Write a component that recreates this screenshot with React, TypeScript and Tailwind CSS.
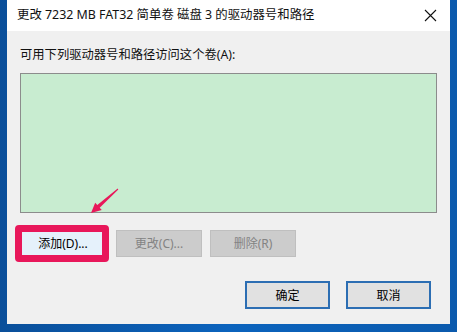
const font = "font-['Noto_Sans','Noto_Sans_CJK_SC',sans-serif]";

function Button({
  label,
  disabled,
  active,
  primary,
}: {
  label: string;
  disabled?: boolean;
  active?: boolean;
  primary?: boolean;
}) {
  let cls = "border border-[#adadad] bg-[#e1e1e1] text-black";
  if (disabled) cls = "border border-[#bfbfbf] bg-[#cccccc] text-[#838383]";
  if (active) cls = "border border-[#0078d7] bg-[#e5f1fb] text-black";
  if (primary) cls = "border-2 border-[#2c6eb3] bg-[#e1e1e1] text-black";
  return (
    <div
      className={`flex items-center justify-center pt-[1px] text-[12px] leading-none ${
        primary ? "h-[28px] w-[85px]" : "h-[27px] w-[86px]"
      } ${cls}`}
    >
      {label}
    </div>
  );
}

export default function App() {
  return (
    <div
      className={`relative flex h-[332px] w-[457px] bg-gradient-to-r from-[#0a4f9a] via-[#0b63bd] to-[#0b5aad] ${font}`}
    >
      <div className="ml-[7px] flex h-[324px] w-[443px] flex-col bg-[#f0f0f0]">
        {/* title bar */}
        <div className="flex h-[31px] items-center justify-between bg-white pl-[10px] pr-[10px]">
          <span className="text-[12.4px] text-[#111]">
            更改 7232 MB FAT32 简单卷 磁盘 3 的驱动器号和路径
          </span>
          <svg width="13" height="13" viewBox="0 0 13 13" className="mr-[3px]">
            <path d="M1 1L12 12M12 1L1 12" stroke="#111" strokeWidth="1.1" />
          </svg>
        </div>

        {/* body */}
        <div className="flex flex-1 flex-col px-[13px]">
          <div className="mt-[16px] text-[12.3px] leading-[16px] text-[#111]">
            可用下列驱动器号和路径访问这个卷(A):
          </div>
          <div className="mt-[10px] h-[140px] border border-[#8c8c8c] bg-[#c8ecd0]" />
          <div className="mt-[17px] flex gap-[8px]">
            <Button label="添加(D)..." active />
            <div className="ml-[2px]">
              <Button label="更改(C)..." disabled />
            </div>
            <Button label="删除(R)" disabled />
          </div>
          <div className="mt-[24px] flex justify-end gap-[16px] pr-[6px]">
            <Button label="确定" primary />
            <Button label="取消" primary />
          </div>
        </div>
      </div>

      {/* annotation: highlight box */}
      <div className="absolute left-[15px] top-[225px] h-[37px] w-[94px] rounded-[4px] border-[7px] border-[#e8175a]" />
      {/* annotation: arrow */}
      <svg
        className="absolute left-[86px] top-[185px]"
        width="38"
        height="34"
        viewBox="0 0 38 34"
      >
        <path
          d="M31.7 3.6 L11.3 20.1 L9.2 17.7 L5 28 L15.8 25.1 L13.7 22.7 L32.3 4.4 Z"
          fill="#e8175a"
        />
      </svg>
    </div>
  );
}
